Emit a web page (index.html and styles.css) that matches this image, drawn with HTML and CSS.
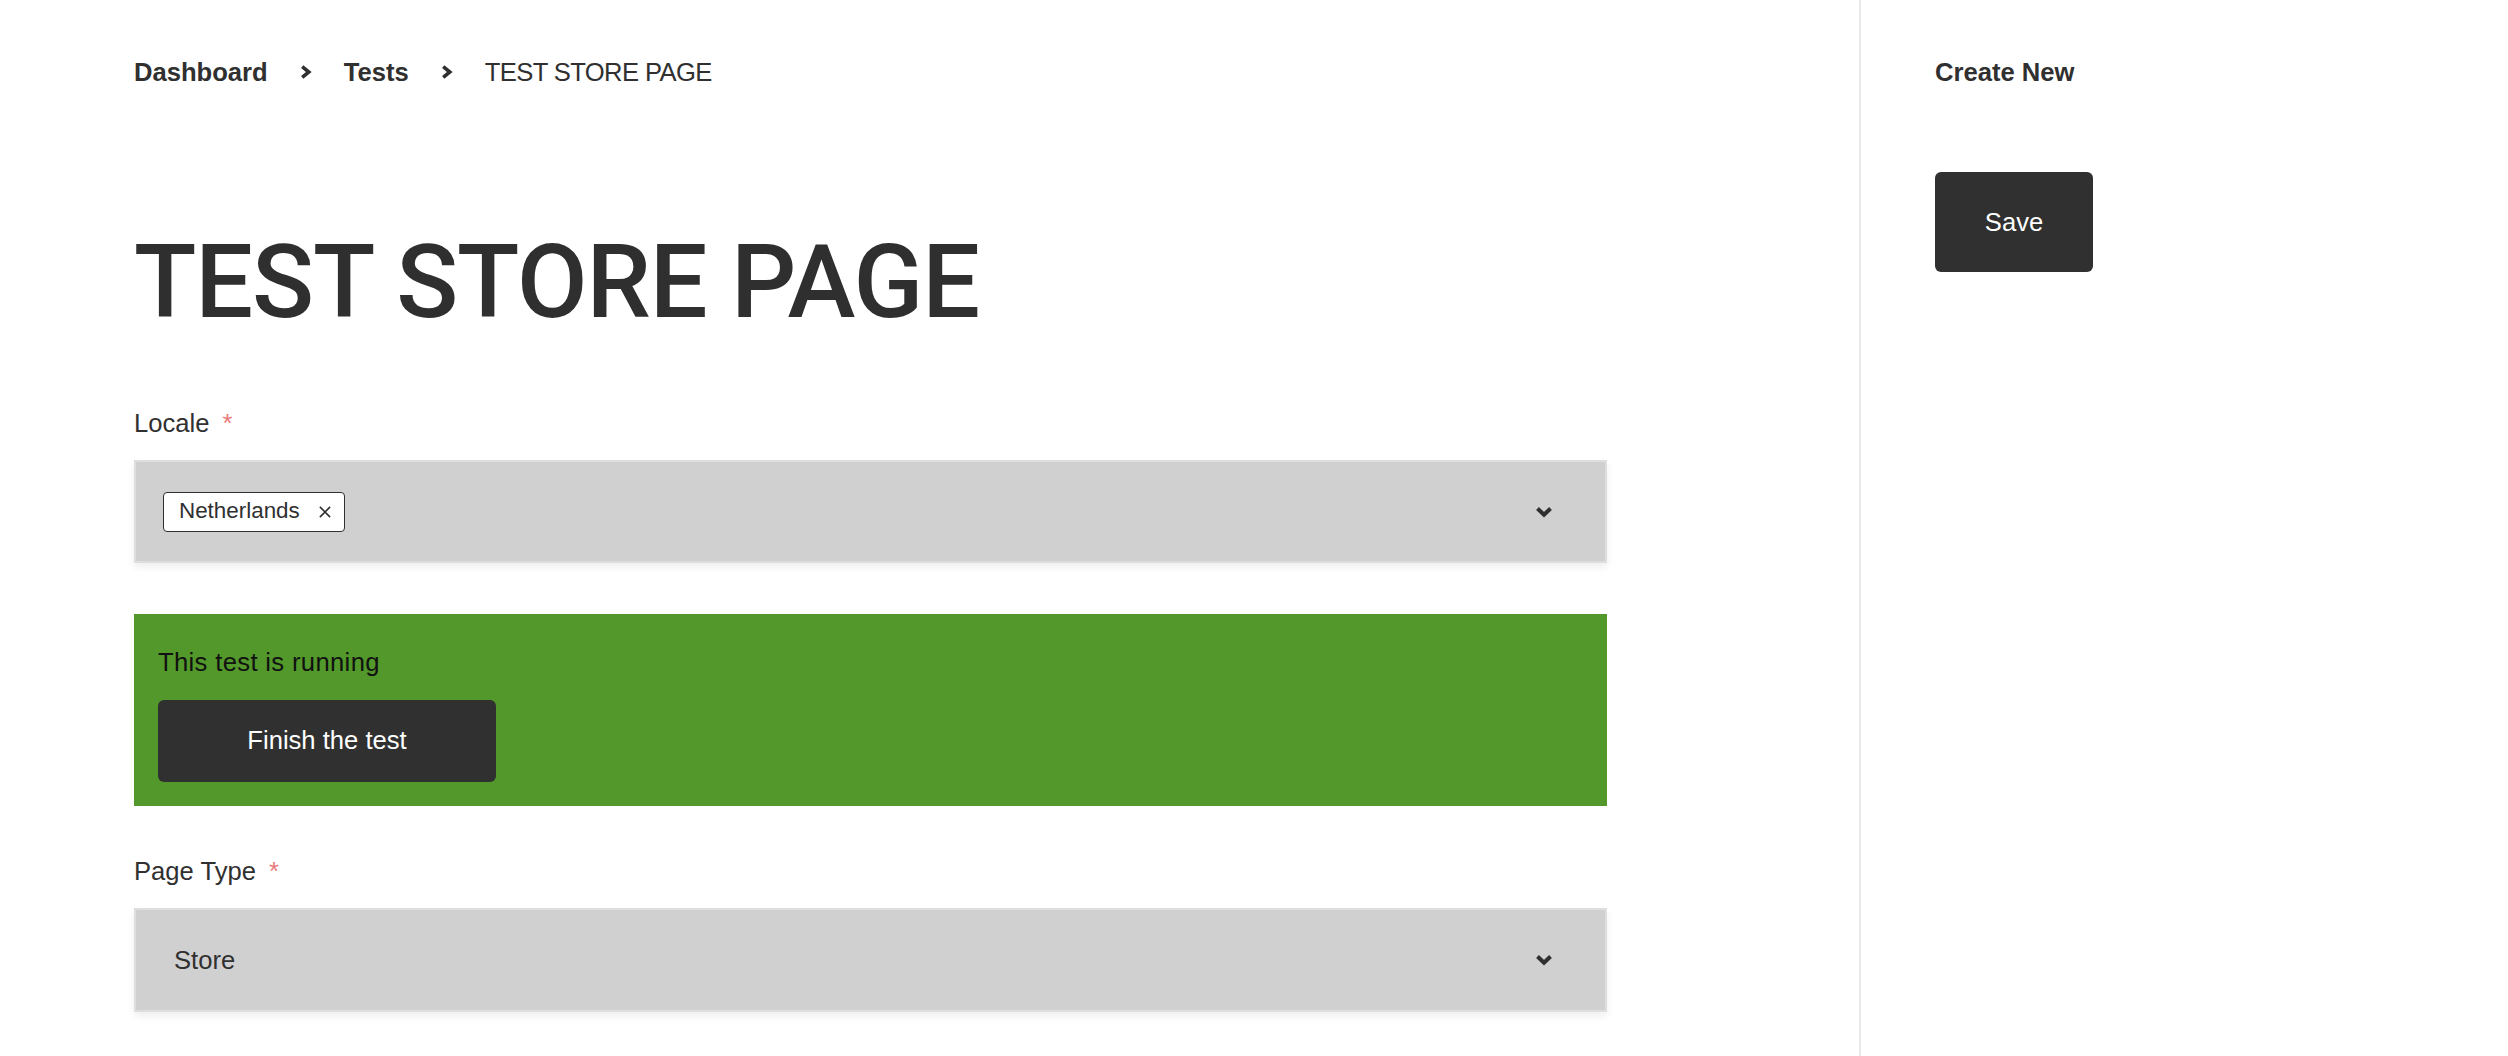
FILE: index.html
```html
<!DOCTYPE html>
<html lang="en">
<head>
<meta charset="utf-8">
<title>TEST STORE PAGE</title>
<link rel="stylesheet" href="styles.css">
</head>
<body>
<div class="layout">
  <main class="main">
    <nav class="crumbs">
      <a class="crumb crumb-link">Dashboard</a>
      <svg class="crumb-sep" viewBox="0 0 14 14" width="14" height="14"><polyline points="3.2,1.6 9.8,7 3.2,12.4" fill="none" stroke="#303030" stroke-width="3.6"/></svg>
      <a class="crumb crumb-link">Tests</a>
      <svg class="crumb-sep" viewBox="0 0 14 14" width="14" height="14"><polyline points="3.2,1.6 9.8,7 3.2,12.4" fill="none" stroke="#303030" stroke-width="3.6"/></svg>
      <span class="crumb crumb-current">TEST STORE PAGE</span>
    </nav>

    <h1 class="title">TEST STORE PAGE</h1>

    <div class="field">
      <label class="field-label">Locale<span class="req">*</span></label>
      <div class="select select-multi">
        <div class="select-values">
          <span class="chip">Netherlands
            <svg class="chip-x" viewBox="0 0 12 12" width="12" height="12"><path d="M0.9 0.9 L11.1 11.1 M11.1 0.9 L0.9 11.1" stroke="#303030" stroke-width="1.6" fill="none"/></svg>
          </span>
        </div>
        <svg class="select-caret" viewBox="0 0 18 12" width="18" height="12"><polyline points="2.5,2.5 9,8.8 15.5,2.5" fill="none" stroke="#303030" stroke-width="4"/></svg>
      </div>
    </div>

    <div class="status">
      <p class="status-text">This test is running</p>
      <button class="btn btn-finish">Finish the test</button>
    </div>

    <div class="field field-page">
      <label class="field-label">Page Type<span class="req">*</span></label>
      <div class="select select-single">
        <span class="select-value">Store</span>
        <svg class="select-caret" viewBox="0 0 18 12" width="18" height="12"><polyline points="2.5,2.5 9,8.8 15.5,2.5" fill="none" stroke="#303030" stroke-width="4"/></svg>
      </div>
    </div>
  </main>

  <aside class="side">
    <h2 class="side-title">Create New</h2>
    <button class="btn btn-save">Save</button>
  </aside>
</div>
</body>
</html>
```

FILE: styles.css
```css
html, body {
  margin: 0;
  padding: 0;
  background: #ffffff;
}

body {
  font-family: "Liberation Sans", Arial, sans-serif;
  color: #303030;
  font-size: 25.6px;
  line-height: 38.4px;
}

.layout {
  display: flex;
  min-height: 1056px;
}

.main {
  flex: 1;
  padding: 53px 0 0 134px;
  min-width: 0;
}

.crumbs {
  display: flex;
  align-items: center;
  gap: 31px;
  height: 38.4px;
}

.crumb {
  font-size: 25.6px;
  line-height: 38.4px;
  color: #303030;
  text-decoration: none;
}

.crumb-link {
  font-weight: 700;
}

.crumb-current {
  font-weight: 400;
  letter-spacing: -0.6px;
}

.crumb-sep {
  display: block;
  flex: none;
}

.title {
  margin: 140px 0 0 0;
  font-family: Roboto, "Liberation Sans", Arial, sans-serif;
  font-size: 102.4px;
  line-height: 102.4px;
  font-weight: 500;
  letter-spacing: -1.1px;
  color: #2f2f2f;
}

.field {
  margin-top: 70px;
  width: 1473px;
}

.field-page {
  margin-top: 46.5px;
}

.field-label {
  display: block;
  font-size: 25.6px;
  line-height: 38.4px;
  color: #303030;
  margin-bottom: 17.6px;
}

.req {
  color: #e97a7a;
  margin-left: 13px;
}

.select {
  box-sizing: border-box;
  height: 103.5px;
  background: #d0d0d0;
  border: 2px solid #dedede;
  box-shadow: 0 4px 8px rgba(0, 0, 0, 0.07);
  display: flex;
  align-items: center;
  justify-content: space-between;
  padding-right: 52px;
}

.select-multi {
  padding-left: 27px;
}

.select-single {
  padding-left: 38px;
}

.select-values {
  display: flex;
  align-items: center;
  gap: 8px;
}

.chip {
  box-sizing: border-box;
  height: 40px;
  display: inline-flex;
  align-items: center;
  gap: 19px;
  padding: 0 13px 0 15px;
  background: #ffffff;
  border: 1.8px solid #303030;
  border-radius: 4px;
  font-size: 22.4px;
  line-height: 1;
  color: #303030;
}

.chip-x {
  display: block;
}

.select-caret {
  display: block;
  flex: none;
}

.select-value {
  font-size: 25.6px;
  line-height: 38.4px;
  color: #303030;
}

.status {
  box-sizing: border-box;
  margin-top: 51px;
  width: 1473px;
  background: #52982a;
  padding: 29px 24px 24px 24px;
}

.status-text {
  margin: 0 0 18px 0;
  font-size: 25.6px;
  line-height: 38.4px;
  letter-spacing: 0.35px;
  color: #111111;
}

.btn {
  display: flex;
  align-items: center;
  justify-content: center;
  border: none;
  border-radius: 6px;
  background: #303030;
  color: #ffffff;
  font-family: "Liberation Sans", Arial, sans-serif;
  font-size: 25.6px;
  padding: 0;
  cursor: pointer;
}

.btn-finish {
  width: 338px;
  height: 82px;
}

.side {
  box-sizing: border-box;
  width: 649px;
  flex: none;
  border-left: 2px solid #e9e9e9;
  padding: 53px 0 0 74px;
}

.side-title {
  margin: 0;
  font-size: 25.6px;
  line-height: 38.4px;
  font-weight: 700;
  color: #303030;
}

.btn-save {
  margin-top: 80.6px;
  width: 158px;
  height: 100px;
}
```
